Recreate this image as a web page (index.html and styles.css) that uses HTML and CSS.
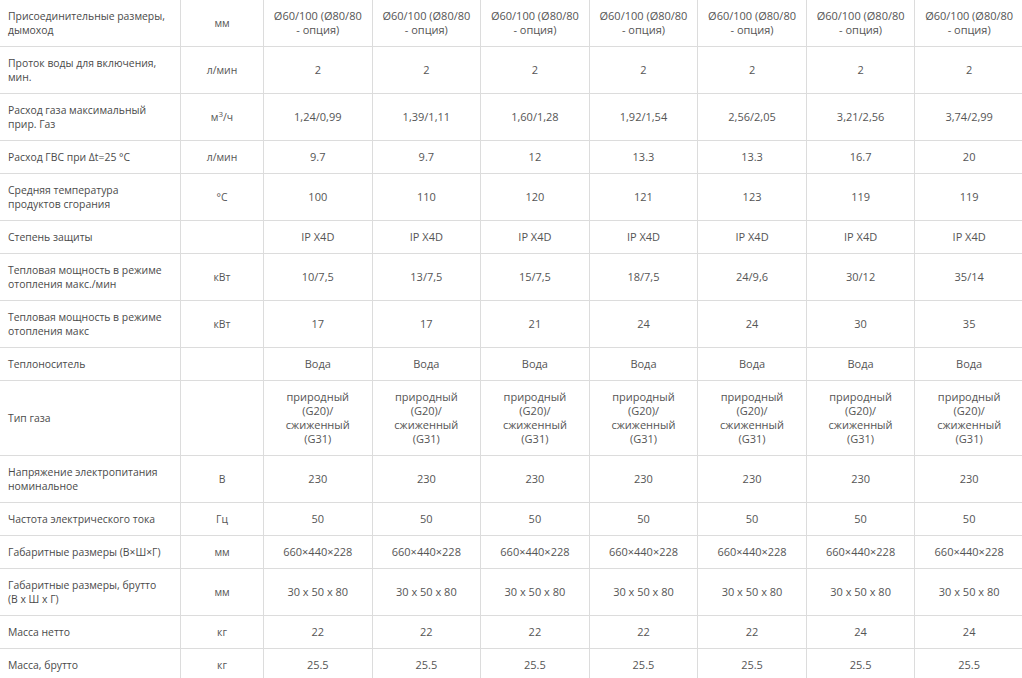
FILE: index.html
```html
<!DOCTYPE html>
<html lang="ru">
<head>
<meta charset="utf-8">
<title>Характеристики</title>
<link rel="stylesheet" href="styles.css">
</head>
<body>
<table class="specs">
<colgroup>
<col class="c-label"><col class="c-unit">
<col class="c-val"><col class="c-val"><col class="c-val"><col class="c-val"><col class="c-val"><col class="c-val"><col class="c-val">
</colgroup>
<tbody>
<tr><td class="label">Присоединительные размеры, дымоход</td><td class="unit">мм</td><td>Ø60/100 (Ø80/80 - опция)</td><td>Ø60/100 (Ø80/80 - опция)</td><td>Ø60/100 (Ø80/80 - опция)</td><td>Ø60/100 (Ø80/80 - опция)</td><td>Ø60/100 (Ø80/80 - опция)</td><td>Ø60/100 (Ø80/80 - опция)</td><td>Ø60/100 (Ø80/80 - опция)</td></tr>
<tr><td class="label">Проток воды для включения, мин.</td><td class="unit">л/мин</td><td>2</td><td>2</td><td>2</td><td>2</td><td>2</td><td>2</td><td>2</td></tr>
<tr><td class="label">Расход газа максимальный прир. Газ</td><td class="unit">м<sup>3</sup>/ч</td><td>1,24/0,99</td><td>1,39/1,11</td><td>1,60/1,28</td><td>1,92/1,54</td><td>2,56/2,05</td><td>3,21/2,56</td><td>3,74/2,99</td></tr>
<tr><td class="label">Расход ГВС при Δt=25 °C</td><td class="unit">л/мин</td><td>9.7</td><td>9.7</td><td>12</td><td>13.3</td><td>13.3</td><td>16.7</td><td>20</td></tr>
<tr><td class="label">Средняя температура продуктов сгорания</td><td class="unit">°C</td><td>100</td><td>110</td><td>120</td><td>121</td><td>123</td><td>119</td><td>119</td></tr>
<tr><td class="label">Степень защиты</td><td class="unit"></td><td>IP X4D</td><td>IP X4D</td><td>IP X4D</td><td>IP X4D</td><td>IP X4D</td><td>IP X4D</td><td>IP X4D</td></tr>
<tr><td class="label">Тепловая мощность в режиме отопления макс./мин</td><td class="unit">кВт</td><td>10/7,5</td><td>13/7,5</td><td>15/7,5</td><td>18/7,5</td><td>24/9,6</td><td>30/12</td><td>35/14</td></tr>
<tr><td class="label">Тепловая мощность в режиме отопления макс</td><td class="unit">кВт</td><td>17</td><td>17</td><td>21</td><td>24</td><td>24</td><td>30</td><td>35</td></tr>
<tr><td class="label">Теплоноситель</td><td class="unit"></td><td>Вода</td><td>Вода</td><td>Вода</td><td>Вода</td><td>Вода</td><td>Вода</td><td>Вода</td></tr>
<tr><td class="label">Тип газа</td><td class="unit"></td><td>природный (G20)/ сжиженный (G31)</td><td>природный (G20)/ сжиженный (G31)</td><td>природный (G20)/ сжиженный (G31)</td><td>природный (G20)/ сжиженный (G31)</td><td>природный (G20)/ сжиженный (G31)</td><td>природный (G20)/ сжиженный (G31)</td><td>природный (G20)/ сжиженный (G31)</td></tr>
<tr><td class="label">Напряжение электропитания номинальное</td><td class="unit">В</td><td>230</td><td>230</td><td>230</td><td>230</td><td>230</td><td>230</td><td>230</td></tr>
<tr><td class="label">Частота электрического тока</td><td class="unit">Гц</td><td>50</td><td>50</td><td>50</td><td>50</td><td>50</td><td>50</td><td>50</td></tr>
<tr><td class="label">Габаритные размеры (В×Ш×Г)</td><td class="unit">мм</td><td>660×440×228</td><td>660×440×228</td><td>660×440×228</td><td>660×440×228</td><td>660×440×228</td><td>660×440×228</td><td>660×440×228</td></tr>
<tr><td class="label">Габаритные размеры, брутто (В&nbsp;х&nbsp;Ш&nbsp;х&nbsp;Г)</td><td class="unit">мм</td><td>30 x 50 x 80</td><td>30 x 50 x 80</td><td>30 x 50 x 80</td><td>30 x 50 x 80</td><td>30 x 50 x 80</td><td>30 x 50 x 80</td><td>30 x 50 x 80</td></tr>
<tr><td class="label">Масса нетто</td><td class="unit">кг</td><td>22</td><td>22</td><td>22</td><td>22</td><td>22</td><td>24</td><td>24</td></tr>
<tr><td class="label">Масса, брутто</td><td class="unit">кг</td><td>25.5</td><td>25.5</td><td>25.5</td><td>25.5</td><td>25.5</td><td>25.5</td><td>25.5</td></tr>
</tbody>
</table>
</body>
</html>
```

FILE: styles.css
```css
html, body {
  margin: 0;
  padding: 0;
  background: #fff;
}

.specs {
  border-collapse: collapse;
  table-layout: fixed;
  width: 1024px;
  margin: -1px 0 0 -1px;
  font-family: "Open Sans", "DejaVu Sans", sans-serif;
  font-size: 11px;
  line-height: 14px;
  color: #555;
}

.c-label { width: 181px; }
.c-unit { width: 83px; }
.c-val { width: 108.57px; }

.specs td {
  border: 1px solid #dcdcdc;
  padding: 9px 8px;
  text-align: center;
  vertical-align: middle;
}

.specs td.label {
  text-align: left;
  font-size: 10.4px;
  color: #4a4a4a;
}

.specs td.unit {
  font-size: 10.4px;
}

.specs sup {
  font-size: 8px;
  line-height: 0;
  vertical-align: 4px;
}
```
